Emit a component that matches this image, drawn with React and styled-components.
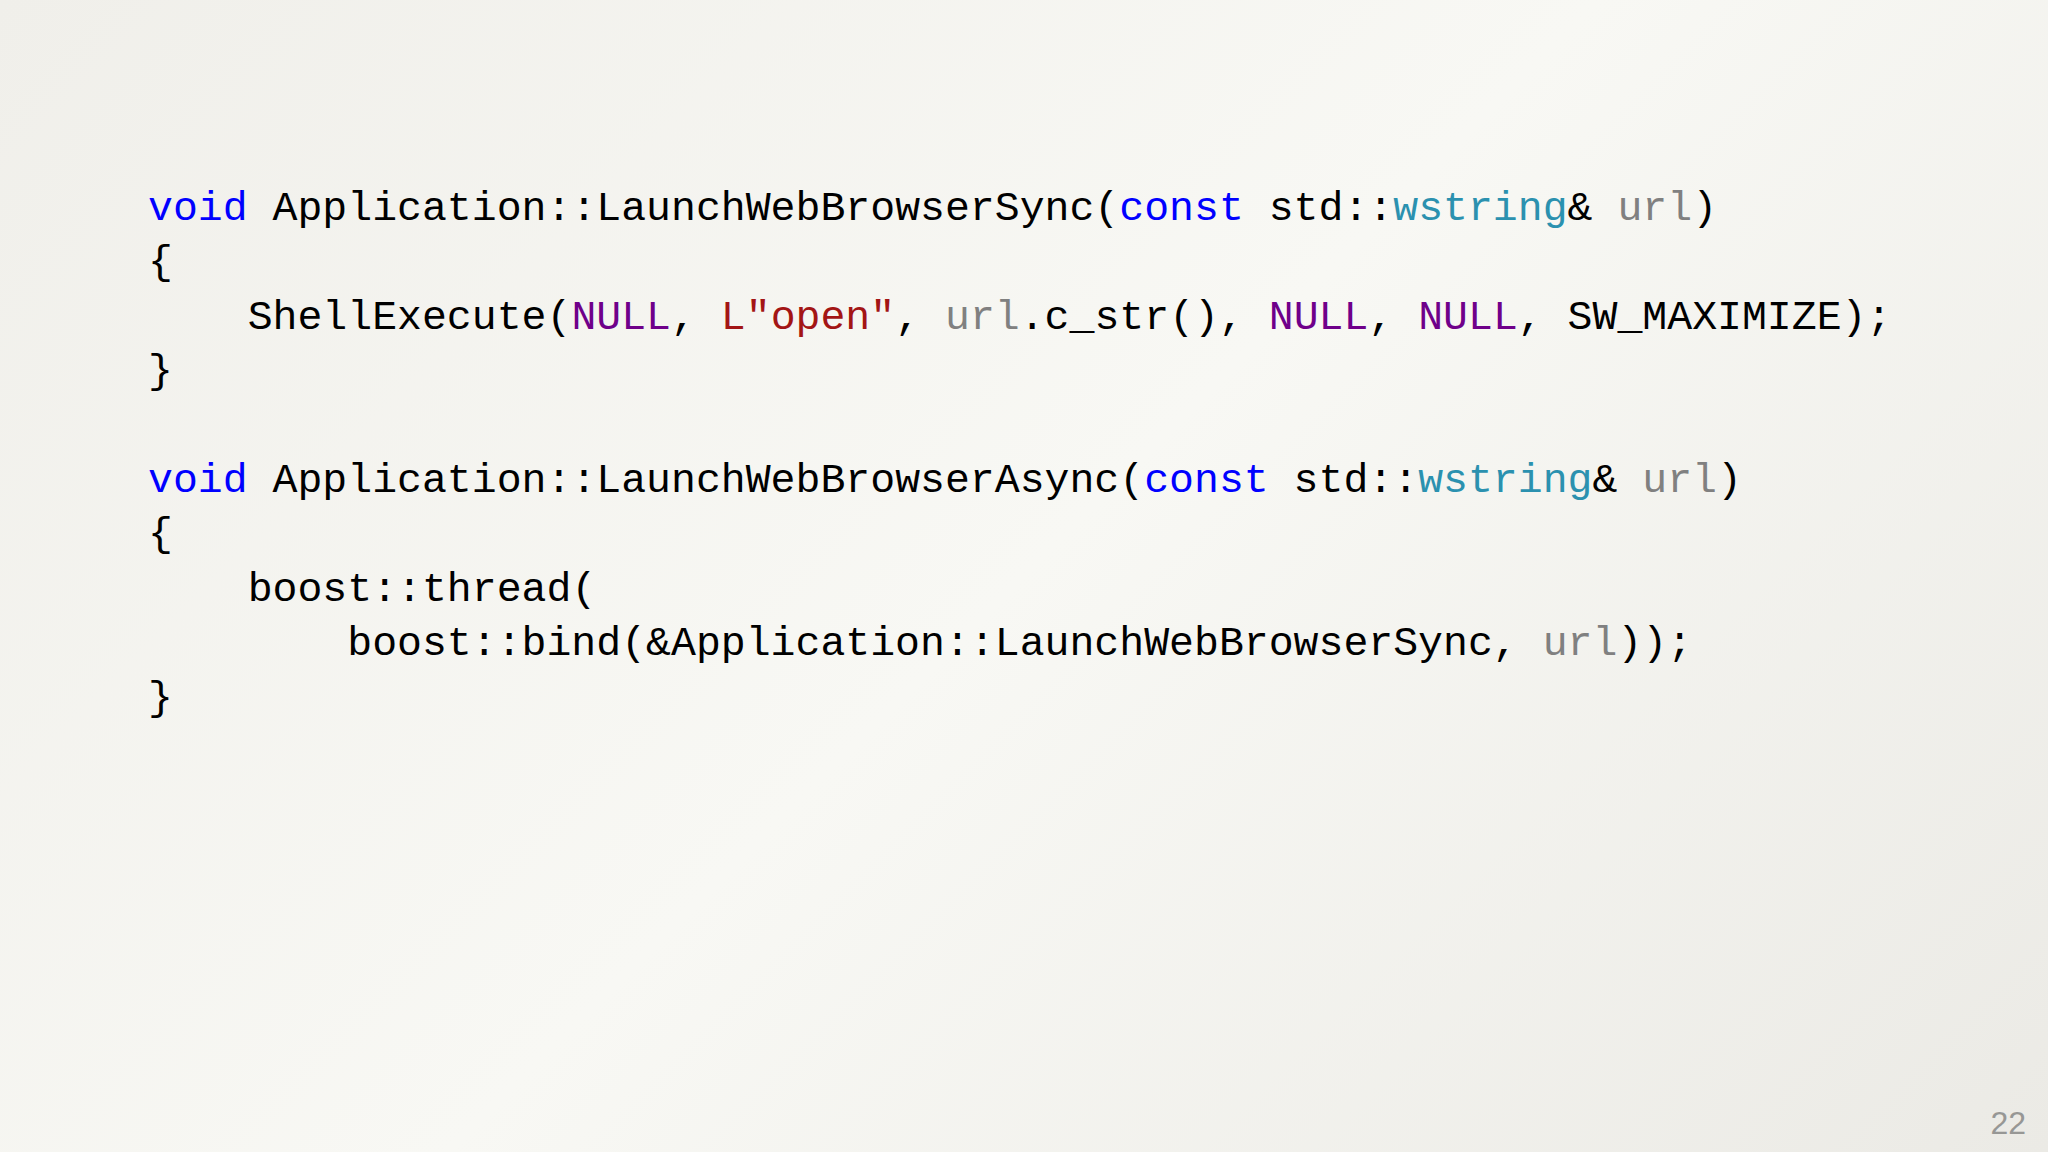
import React from 'react';
import styled, { createGlobalStyle } from 'styled-components';

const GlobalStyle = createGlobalStyle`
  html, body {
    margin: 0;
    padding: 0;
  }
`;

const Slide = styled.div`
  width: 2048px;
  height: 1152px;
  box-sizing: border-box;
  display: flex;
  flex-direction: column;
  padding: 182px 22px 10px 148px;
  background: linear-gradient(135deg, #f0efea 0%, #f8f8f4 50%, #ebeae5 100%);
  overflow: hidden;
`;

const Code = styled.pre`
  margin: 0;
  font-family: "Liberation Mono", "DejaVu Sans Mono", monospace;
  font-size: 41.5px;
  line-height: 54.4px;
  color: #000;
`;

const colors = {
  keyword: '#0000ff',
  type: '#2b91af',
  param: '#808080',
  macro: '#6f008a',
  string: '#a31515',
};

const Tok = styled.span`
  color: ${(p) => colors[p.$kind] || '#000'};
`;

const PageNumber = styled.div`
  margin-top: auto;
  align-self: flex-end;
  font-family: "Liberation Sans", Arial, sans-serif;
  font-size: 32px;
  color: #979795;
`;

const K = ({ children }) => <Tok $kind="keyword">{children}</Tok>;
const T = ({ children }) => <Tok $kind="type">{children}</Tok>;
const P = ({ children }) => <Tok $kind="param">{children}</Tok>;
const M = ({ children }) => <Tok $kind="macro">{children}</Tok>;
const S = ({ children }) => <Tok $kind="string">{children}</Tok>;

export default function App() {
  return (
    <>
      <GlobalStyle />
      <Slide>
        <Code>
          <K>void</K> Application::LaunchWebBrowserSync(<K>const</K> std::<T>wstring</T>& <P>url</P>){'\n'}
          {'{\n'}
          {'    '}ShellExecute(<M>NULL</M>, <S>L"open"</S>, <P>url</P>.c_str(), <M>NULL</M>, <M>NULL</M>, SW_MAXIMIZE);{'\n'}
          {'}\n'}
          {'\n'}
          <K>void</K> Application::LaunchWebBrowserAsync(<K>const</K> std::<T>wstring</T>& <P>url</P>){'\n'}
          {'{\n'}
          {'    '}boost::thread({'\n'}
          {'        '}boost::bind(&Application::LaunchWebBrowserSync, <P>url</P>));{'\n'}
          {'}'}
        </Code>
        <PageNumber>22</PageNumber>
      </Slide>
    </>
  );
}
